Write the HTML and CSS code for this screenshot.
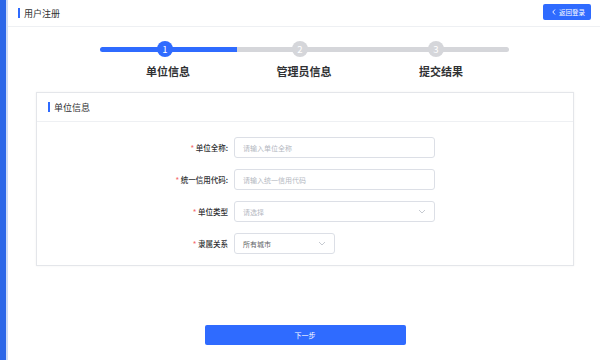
FILE: index.html
```html
<!DOCTYPE html>
<html lang="zh">
<head>
<meta charset="utf-8">
<link rel="stylesheet" href="styles.css">
</head>
<body>
<div class="app">
  <div class="side"></div>
  <div class="main">
    <header class="top">
      <div class="title"><span class="bar"></span>用户注册</div>
      <button class="back"><svg width="6" height="8" viewBox="0 0 6 8"><path d="M4 1.5 L1.8 4 L4 6.5" fill="none" stroke="#fff" stroke-width="0.9"/></svg>返回登录</button>
    </header>
    <div class="steps">
      <div class="track">
        <div class="seg on"></div><div class="seg"></div><div class="seg"></div>
      </div>
      <div class="dots">
        <span class="dot on">1</span><span class="dot">2</span><span class="dot">3</span>
      </div>
      <div class="labels">
        <span class="l1">单位信息</span><span class="l2">管理员信息</span><span class="l3">提交结果</span>
      </div>
    </div>
    <section class="card">
      <div class="card-head"><span class="bar"></span>单位信息</div>
      <div class="form">
        <div class="row"><label><i>*</i> 单位全称:</label><div class="input ph">请输入单位全称</div></div>
        <div class="row"><label><i>*</i> 统一信用代码:</label><div class="input ph">请输入统一信用代码</div></div>
        <div class="row"><label><i>*</i> 单位类型</label><div class="input ph sel">请选择<svg width="8" height="5" viewBox="0 0 8 5"><path d="M1 1 L4 4 L7 1" fill="none" stroke="#c0c4cc" stroke-width="0.9"/></svg></div></div>
        <div class="row"><label><i>*</i> 隶属关系</label><div class="input sel short">所有城市<svg width="8" height="5" viewBox="0 0 8 5"><path d="M1 1 L4 4 L7 1" fill="none" stroke="#c0c4cc" stroke-width="0.9"/></svg></div></div>
      </div>
    </section>
    <div class="footer"><button class="next">下一步</button></div>
  </div>
</div>
</body>
</html>
```
FILE: styles.css
```css
* { box-sizing: border-box; }
html, body { margin: 0; padding: 0; }
body {
  width: 600px; height: 360px; overflow: hidden; background: #fff;
  font-family: "Noto Sans CJK SC", "Noto Sans", sans-serif; color: #303133;
}
.app { display: flex; height: 360px; }
.side { width: 8px; background: #2b66e8; border-right: 2px solid #cfdcf6; flex: none; }
.main { flex: 1; display: flex; flex-direction: column; }
.top {
  height: 27px; border-bottom: 1px solid #eef0f3;
  display: flex; align-items: center; justify-content: space-between;
  padding: 0 9px 0 10px;
}
.title { display: flex; align-items: center; font-size: 9px; color: #303133; }
.bar { display: inline-block; width: 2px; height: 10px; background: #2f6bff; margin-right: 4px; }
.back {
  align-self: flex-start; margin-top: 4px;
  display: flex; align-items: center; gap: 2px;
  height: 16px; width: 48px; padding: 0 0 0 8px;
  background: #2f6bff; color: #fff; border: none; border-radius: 2px;
  font-family: inherit; font-size: 6.5px;
}
.steps { position: relative; height: 64px; }
.track { position: absolute; left: 92px; top: 20px; width: 409px; height: 5px; display: flex; }
.seg { height: 5px; background: #d5d6da; }
.seg:nth-child(1) { width: 137px; border-radius: 3px 0 0 3px; }
.seg:nth-child(2) { width: 136px; }
.seg:nth-child(3) { width: 136px; border-radius: 0 3px 3px 0; }
.seg.on { background: #2f6bff; }
.dots { position: absolute; left: 0; top: 14px; width: 100%; height: 16px; }
.dot {
  position: absolute; width: 16px; height: 16px; border-radius: 50%;
  background: #d5d6da; color: #fff; font-size: 9.5px; line-height: 16px; text-align: center;
}
.dot:nth-child(1) { left: 149px; }
.dot:nth-child(2) { left: 284px; }
.dot:nth-child(3) { left: 420px; }
.dot.on { background: #2f6bff; }
.labels { position: absolute; top: 36px; left: 0; width: 100%; font-size: 11px; font-weight: 700; color: #303133; }
.labels span { position: absolute; width: 100px; text-align: center; }
.l1 { left: 110px; }
.l2 { left: 246px; }
.l3 { left: 383px; }
.card {
  margin: 1px 26px 0 28px; height: 174px;
  border: 1px solid #e4e6ea; box-shadow: 0 0 2px rgba(0,0,0,0.06);
}
.card-head {
  height: 29px; border-bottom: 1px solid #eef0f3;
  display: flex; align-items: center; padding-left: 11px; font-size: 9px;
}
.card-head .bar { margin-right: 4px; }
.form { padding-top: 15px; display: flex; flex-direction: column; gap: 11px; }
.row { display: flex; align-items: center; height: 21px; }
.row label { width: 197px; text-align: right; padding-right: 6px; font-size: 7.5px; font-weight: 500; color: #303133; }
.row label i { color: #f56c6c; font-style: normal; }
.input {
  width: 201px; height: 21px; border: 1px solid #dcdfe6; border-radius: 3px;
  display: flex; align-items: center; justify-content: space-between; padding: 0 8px;
  font-size: 7px; color: #606266;
}
.input.ph { color: #b4b8bf; }
.input.short { width: 101px; }
.footer { display: flex; justify-content: center; padding-top: 58px; padding-left: 2px; }
.next {
  width: 201px; height: 20px; margin-top: 1px; background: #2f6bff; color: #fff; border: none; border-radius: 2px;
  font-family: inherit; font-size: 7px;
}
```
